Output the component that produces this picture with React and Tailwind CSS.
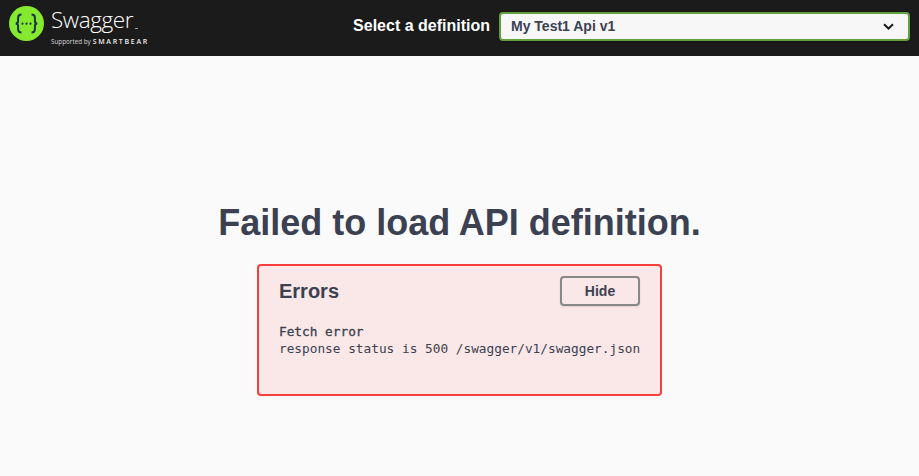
import React from 'react';

const sans = { fontFamily: '"Liberation Sans", Arial, sans-serif' };
const logoFont = { fontFamily: '"Open Sans", sans-serif' };

const Logo = () => (
  <div className="flex items-center gap-[7px] w-[150px] shrink-0">
    <svg width="35" height="35" viewBox="0 0 35 35" className="shrink-0 mb-[6px]">
      <circle cx="17.500" cy="17.500" r="17.500" fill="#85ea2d" />
      <path d="M12.500 8.500c-2.600 0-3.400 1-3.400 3.200v3.200c0 1.500-.8 2.400-2.300 2.600 1.500.2 2.300 1.100 2.300 2.600v3.200c0 2.200.8 3.200 3.400 3.200" fill="none" stroke="#173647" strokeWidth="2" />
      <path d="M22.500 8.500c2.600 0 3.400 1 3.400 3.200v3.200c0 1.500.8 2.400 2.300 2.600-1.500.2-2.300 1.100-2.300 2.600v3.200c0 2.200-.8 3.200-3.400 3.200" fill="none" stroke="#173647" strokeWidth="2" />
      <circle cx="13.500" cy="17.700" r="1.100" fill="#173647" />
      <circle cx="17.500" cy="17.700" r="1.100" fill="#173647" />
      <circle cx="21.500" cy="17.700" r="1.100" fill="#173647" />
    </svg>
    <div className="flex flex-col text-white pt-[2px]">
      <div className="text-[22.500px] leading-[24px] font-light tracking-[-0.4px] flex items-end" style={logoFont}>
        Swagger
        <div className="w-[3px] h-[1px] bg-[#9a9a9a] ml-[2px] mb-[3px]" />
      </div>
      <div className="flex items-center leading-[10px] mt-[5px]">
        <span className="text-[6.300px] text-[#d9d9d9]" style={logoFont}>Supported by</span>
        <span className="text-[7px] font-semibold tracking-[1.700px] ml-[2px] text-[#eeeeee]" style={logoFont}>SMARTBEAR</span>
      </div>
    </div>
  </div>
);

const App = () => {
  return (
    <div className="min-h-[476px] bg-[#fafafa]" style={sans}>
      <header className="h-[56px] bg-[#1b1b1b] flex items-center pl-[9px] pr-[9px] pb-[3px]">
        <Logo />
        <div className="flex-1 flex items-center justify-end">
          <label className="text-white text-[16px] font-bold mr-[9px] mb-[2px]">Select a definition</label>
          <div className="w-[411px] h-[29px] bg-[#f7f7f7] border-2 border-[#62a03f] rounded-[4px] flex items-center justify-between pl-[10px] pr-[14px] shadow-[0_1px_2px_0_rgba(0,0,0,0.25)]">
            <span className="text-[14px] font-bold text-[#3b4151]">My Test1 Api v1</span>
            <svg width="11" height="7" viewBox="0 0 11 7">
              <path d="M1 1.200 5.500 5.500 10 1.200" fill="none" stroke="#1b1b1b" strokeWidth="2" />
            </svg>
          </div>
        </div>
      </header>
      <main className="flex flex-col items-center pt-[145px]">
        <h1 className="text-[36px] leading-[44px] font-bold text-[#3b4151] text-center">Failed to load API definition.</h1>
        <section className="w-[405px] h-[132px] mt-[19px] bg-[#fae7e7] border-2 border-[#f93e3e] rounded-[4px] px-[20px] pt-[10px]">
          <div className="flex items-center justify-between">
            <h4 className="text-[20px] font-bold text-[#3b4151]">Errors</h4>
            <button className="w-[80px] h-[30px] border-2 border-[#888888] rounded-[4px] text-[14px] font-bold text-[#3b4151] shadow-[0_1px_2px_rgba(0,0,0,0.1)]">Hide</button>
          </div>
          <div className="mt-[17px] text-[12.770px] leading-[17px] text-[#3b4151]" style={{ fontFamily: '"DejaVu Sans Mono", monospace' }}>
            <div className="[-webkit-text-stroke:0.3px_#3b4151]">Fetch error</div>
            <div className="whitespace-nowrap">response status is 500 /swagger/v1/swagger.json</div>
          </div>
        </section>
      </main>
    </div>
  );
};

export default App;
